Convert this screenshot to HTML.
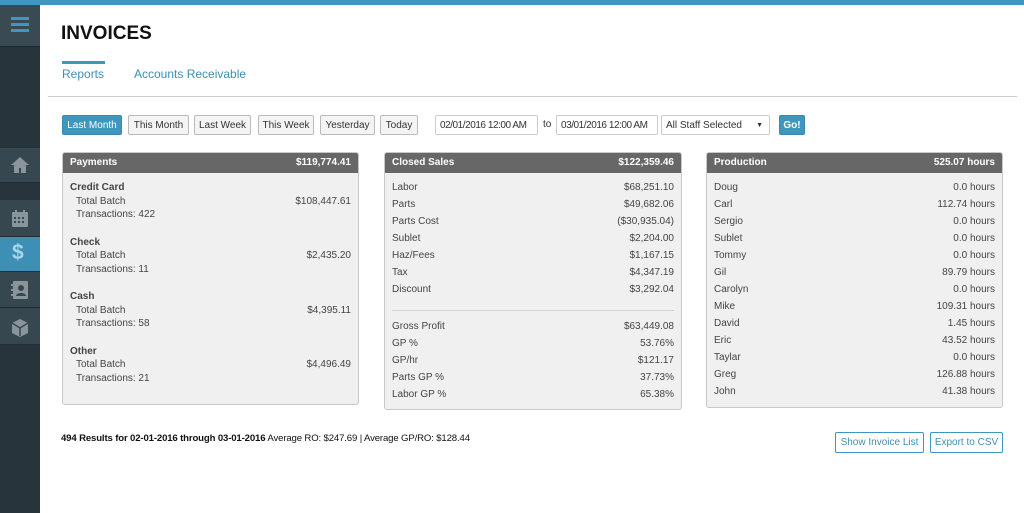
<!DOCTYPE html>
<html><head><style>
*{margin:0;padding:0;box-sizing:border-box}
body{width:1024px;height:513px;overflow:hidden;background:#fff;font-family:"Liberation Sans",Arial,sans-serif;position:relative;color:#333}
.a{position:absolute}
.top{left:0;top:0;width:1024px;height:5px;background:#3d97bf}
.side{left:0;top:5px;width:40px;height:508px;background:#27343b}
.sb{position:absolute;left:0;width:40px;background:#37474f;border-bottom:1px solid #222d33}
.btn{position:absolute;top:115px;height:20px;border:1px solid #bbb;border-radius:2px;background:#f4f4f4;font-size:10px;line-height:19px;text-align:center;color:#333;white-space:nowrap}
.inp{position:absolute;top:115px;height:20px;border:1px solid #ccc;border-radius:2px;background:#fff;font-size:10px;line-height:19px;padding-left:4px;color:#333;white-space:nowrap;overflow:hidden;letter-spacing:-0.45px}
.panel{position:absolute;top:152px;background:#f0f0f0;border:1px solid #c8c8c8;border-radius:3px;overflow:hidden}
.ph{height:20px;background:#676767;color:#fff;font-weight:bold;font-size:10px;line-height:20px;padding:0 7px;display:flex;justify-content:space-between}
.r{position:absolute;left:7px;right:7px;font-size:10px;color:#444;display:flex;justify-content:space-between;line-height:12px}
.ob{position:absolute;top:432px;height:21px;border:1px solid #3d97bf;border-radius:2px;background:#fff;color:#3d8fb5;font-size:10px;line-height:20px;text-align:center;white-space:nowrap}
</style></head><body>
<div class="a top"></div>
<div class="a side">
 <div class="sb" style="top:0;height:42px;background:#3a4a52"></div>
 <div style="position:absolute;left:11px;top:12px;width:18px;height:3px;background:#3d97bf;box-shadow:0 6px 0 #3d97bf,0 12px 0 #3d97bf"></div>
 <div class="sb" style="top:143px;height:35px"></div>
 <svg class="a" style="left:10px;top:151px" width="20" height="18" viewBox="0 0 20 18"><path d="M10 1L1 9h3v8h5v-5h2v5h5V9h3z" fill="#8a959b"/></svg>
 <div class="sb" style="top:195px;height:37px"></div>
 <svg class="a" style="left:11px;top:204px" width="18" height="19" viewBox="0 0 18 19"><rect x="1" y="3" width="16" height="15" rx="1" fill="#8a959b"/><rect x="4" y="1" width="2" height="4" fill="#8a959b"/><rect x="12" y="1" width="2" height="4" fill="#8a959b"/><g fill="#37474f"><rect x="3" y="8" width="2" height="2"/><rect x="7" y="8" width="2" height="2"/><rect x="11" y="8" width="2" height="2"/><rect x="3" y="12" width="2" height="2"/><rect x="7" y="12" width="2" height="2"/><rect x="11" y="12" width="2" height="2"/></g></svg>
 <div class="sb" style="top:232px;height:35px;background:#3d8fb5"></div>
 <div class="a" style="left:12px;top:236px;font-size:21px;font-weight:bold;color:#a9d6ea">$</div>
 <div class="sb" style="top:267px;height:36px"></div>
 <svg class="a" style="left:11px;top:276px" width="18" height="18" viewBox="0 0 18 18"><rect x="2" y="0" width="15" height="18" rx="1" fill="#8a959b"/><circle cx="10" cy="7" r="3" fill="#37474f"/><path d="M5 15c0-4 10-4 10 0z" fill="#37474f"/><rect x="0" y="3" width="4" height="2" fill="#8a959b"/><rect x="0" y="8" width="4" height="2" fill="#8a959b"/><rect x="0" y="13" width="4" height="2" fill="#8a959b"/></svg>
 <div class="sb" style="top:303px;height:37px"></div>
 <svg class="a" style="left:10px;top:313px" width="20" height="20" viewBox="0 0 20 20"><path d="M10 1l8 4v10l-8 4-8-4V5z" fill="#8a959b"/><path d="M10 10v8M2 5l8 5 8-5" stroke="#37474f" stroke-width="1.5" fill="none"/></svg>
</div>

<div class="a" style="left:61px;top:23px;font-size:19px;font-weight:bold;color:#111">INVOICES</div>
<div class="a" style="left:62px;top:61px;width:43px;height:3px;background:#3d97bf"></div>
<div class="a" style="left:62px;top:67px;font-size:12px;color:#3d8fb5">Reports</div>
<div class="a" style="left:134px;top:67px;font-size:12px;color:#3d8fb5">Accounts Receivable</div>
<div class="a" style="left:48px;top:96px;width:969px;height:1px;background:#ccc"></div>

<div class="btn" style="left:62px;width:60px;background:#3d97bf;border-color:#3a8ab0;color:#fff">Last Month</div>
<div class="btn" style="left:128px;width:61px">This Month</div>
<div class="btn" style="left:194px;width:57px">Last Week</div>
<div class="btn" style="left:258px;width:56px">This Week</div>
<div class="btn" style="left:320px;width:55px">Yesterday</div>
<div class="btn" style="left:380px;width:38px">Today</div>
<div class="inp" style="left:435px;width:103px">02/01/2016 12:00 AM</div>
<div class="a" style="left:543px;top:119px;font-size:10px">to</div>
<div class="inp" style="left:556px;width:102px">03/01/2016 12:00 AM</div>
<div class="inp" style="left:661px;width:109px;letter-spacing:0">All Staff Selected<span style="position:absolute;right:6px;font-size:7px">&#9660;</span></div>
<div class="btn" style="left:779px;width:26px;background:#3d97bf;border-color:#3a8ab0;color:#fff;font-weight:bold">Go!</div>

<div class="panel" style="left:62px;width:297px;height:253px">
 <div class="ph"><span>Payments</span><span>$119,774.41</span></div>
 <div class="r" style="top:29px;font-weight:bold">Credit Card</div>
 <div class="r" style="top:43px;left:13px"><span>Total Batch</span><span>$108,447.61</span></div>
 <div class="r" style="top:56px;left:13px">Transactions: 422</div>
 <div class="r" style="top:84px;font-weight:bold">Check</div>
 <div class="r" style="top:97px;left:13px"><span>Total Batch</span><span>$2,435.20</span></div>
 <div class="r" style="top:111px;left:13px">Transactions: 11</div>
 <div class="r" style="top:138px;font-weight:bold">Cash</div>
 <div class="r" style="top:152px;left:13px"><span>Total Batch</span><span>$4,395.11</span></div>
 <div class="r" style="top:165px;left:13px">Transactions: 58</div>
 <div class="r" style="top:193px;font-weight:bold">Other</div>
 <div class="r" style="top:206px;left:13px"><span>Total Batch</span><span>$4,496.49</span></div>
 <div class="r" style="top:220px;left:13px">Transactions: 21</div>
</div>

<div class="panel" style="left:384px;width:298px;height:258px">
 <div class="ph"><span>Closed Sales</span><span>$122,359.46</span></div>
 <div class="r" style="top:29px"><span>Labor</span><span>$68,251.10</span></div>
 <div class="r" style="top:46px"><span>Parts</span><span>$49,682.06</span></div>
 <div class="r" style="top:63px"><span>Parts Cost</span><span>($30,935.04)</span></div>
 <div class="r" style="top:80px"><span>Sublet</span><span>$2,204.00</span></div>
 <div class="r" style="top:97px"><span>Haz/Fees</span><span>$1,167.15</span></div>
 <div class="r" style="top:114px"><span>Tax</span><span>$4,347.19</span></div>
 <div class="r" style="top:131px"><span>Discount</span><span>$3,292.04</span></div>
 <div class="a" style="left:7px;right:7px;top:157px;height:1px;background:#d4d4d4"></div>
 <div class="r" style="top:168px"><span>Gross Profit</span><span>$63,449.08</span></div>
 <div class="r" style="top:185px"><span>GP %</span><span>53.76%</span></div>
 <div class="r" style="top:202px"><span>GP/hr</span><span>$121.17</span></div>
 <div class="r" style="top:219px"><span>Parts GP %</span><span>37.73%</span></div>
 <div class="r" style="top:236px"><span>Labor GP %</span><span>65.38%</span></div>
</div>

<div class="panel" style="left:706px;width:297px;height:256px">
 <div class="ph"><span>Production</span><span>525.07 hours</span></div>
 <div class="r" style="top:29px"><span>Doug</span><span>0.0 hours</span></div>
 <div class="r" style="top:46px"><span>Carl</span><span>112.74 hours</span></div>
 <div class="r" style="top:63px"><span>Sergio</span><span>0.0 hours</span></div>
 <div class="r" style="top:80px"><span>Sublet</span><span>0.0 hours</span></div>
 <div class="r" style="top:97px"><span>Tommy</span><span>0.0 hours</span></div>
 <div class="r" style="top:114px"><span>Gil</span><span>89.79 hours</span></div>
 <div class="r" style="top:131px"><span>Carolyn</span><span>0.0 hours</span></div>
 <div class="r" style="top:148px"><span>Mike</span><span>109.31 hours</span></div>
 <div class="r" style="top:165px"><span>David</span><span>1.45 hours</span></div>
 <div class="r" style="top:182px"><span>Eric</span><span>43.52 hours</span></div>
 <div class="r" style="top:199px"><span>Taylar</span><span>0.0 hours</span></div>
 <div class="r" style="top:216px"><span>Greg</span><span>126.88 hours</span></div>
 <div class="r" style="top:233px"><span>John</span><span>41.38 hours</span></div>
</div>

<div class="a" style="left:61px;top:433px;font-size:9.6px;color:#111;letter-spacing:-0.15px;white-space:nowrap"><b>494 Results for 02-01-2016 through 03-01-2016</b> Average RO: $247.69 | Average GP/RO: $128.44</div>
<div class="ob" style="left:835px;width:89px">Show Invoice List</div>
<div class="ob" style="left:930px;width:73px">Export to CSV</div>
</body></html>
